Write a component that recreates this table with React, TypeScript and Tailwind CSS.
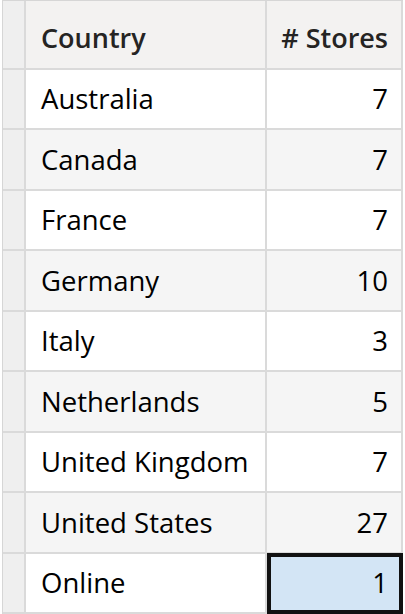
const rows: { country: string; stores: number; h: string }[] = [
  { country: "Australia", stores: 7, h: "h-[58px]" },
  { country: "Canada", stores: 7, h: "h-[59px]" },
  { country: "France", stores: 7, h: "h-[58px]" },
  { country: "Germany", stores: 10, h: "h-[59px]" },
  { country: "Italy", stores: 3, h: "h-[58px]" },
  { country: "Netherlands", stores: 5, h: "h-[59px]" },
  { country: "United Kingdom", stores: 7, h: "h-[58px]" },
  { country: "United States", stores: 27, h: "h-[59px]" },
  { country: "Online", stores: 1, h: "h-[58px]" }
];

export default function App() {
  return (
    <div className="h-[614px] w-[405px] overflow-hidden bg-white font-['Open_Sans',sans-serif]">
      <div className="ml-[2px] flex w-[401px] flex-col gap-[2px] border-l border-t border-[#d6d6d6] bg-[#dadada] pr-[2px]">
        {/* header */}
        <div className="grid h-[67px] grid-cols-[21px_239px_134px] gap-[2px]">
          <div className="bg-[#efefef]" />
          <div className="flex items-center bg-[#f3f2f1] pt-[8px] pl-[15px] text-[27px] font-semibold text-[#252423]">
            Country
          </div>
          <div className="flex items-center justify-end bg-[#f3f2f1] pt-[8px] pr-[13px] text-[27px] font-semibold text-[#252423]">
            # Stores
          </div>
        </div>

        {rows.map((row, i) => {
          const last = i === rows.length - 1;
          const bg = i % 2 === 1 ? "bg-[#f5f5f5]" : "bg-white";
          return (
            <div key={row.country} className={`grid grid-cols-[21px_239px_134px] gap-[2px] ${row.h}`}>
              <div className="bg-[#efefef]" />
              <div className={`flex items-center pl-[15px] text-[27.5px] text-black ${bg}`}>{row.country}</div>
              {last ? (
                <div className="relative flex items-center justify-end bg-[#d3e5f5] pr-[13px] text-[27.5px] text-black">
                  <div className="absolute -right-[2px] -bottom-[2px] left-0 -top-[1px] border-[4px] border-[#111]" />
                  {row.stores}
                </div>
              ) : (
                <div className={`flex items-center justify-end pr-[13px] text-[27.5px] text-black ${bg}`}>
                  {row.stores}
                </div>
              )}
            </div>
          );
        })}
        <div className="h-[1px]" />
      </div>
    </div>
  );
}
